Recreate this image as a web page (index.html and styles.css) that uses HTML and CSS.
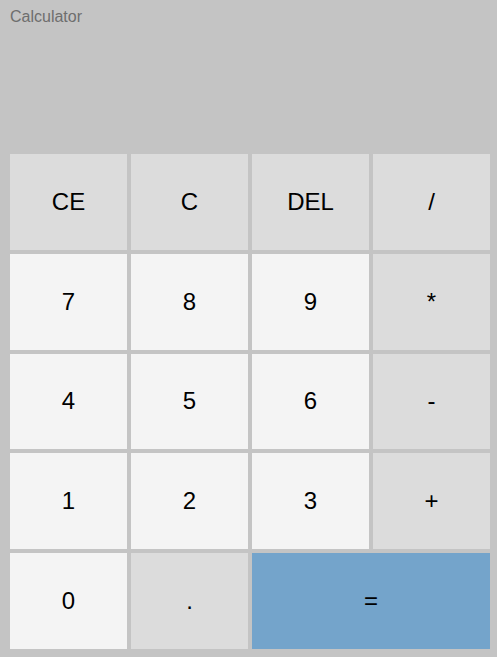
FILE: index.html
```html
<!DOCTYPE html>
<html lang="en">
<head>
    <meta charset="UTF-8">
    <meta name="viewport" content="width=device-width, initial-scale=1.0">
    <title>Calculator</title>
    <link rel="stylesheet" href="styles.css">
</head>
<body>
    <div class="calculator">
        <div class="display">
            <span class="title">Calculator</span>
        </div>
        <div class="keys">
            <button class="key op">CE</button>
            <button class="key op">C</button>
            <button class="key op">DEL</button>
            <button class="key op">/</button>

            <button class="key">7</button>
            <button class="key">8</button>
            <button class="key">9</button>
            <button class="key op">*</button>

            <button class="key">4</button>
            <button class="key">5</button>
            <button class="key">6</button>
            <button class="key op">-</button>

            <button class="key">1</button>
            <button class="key">2</button>
            <button class="key">3</button>
            <button class="key op">+</button>

            <button class="key">0</button>
            <button class="key op">.</button>
            <button class="key equals">=</button>
        </div>
    </div>
</body>
</html>
```

FILE: styles.css
```css
body {
    margin: 0;
    background: #c4c4c4;
    font-family: 'Liberation Sans', Arial, sans-serif;
}

.calculator {
    width: 480px;
    padding: 8px 7px 8px 10px;
}

.display {
    height: 146px;
}

.title {
    font-size: 16px;
    color: #6e6e6e;
}

.keys {
    display: grid;
    grid-template-columns: repeat(4, 117px);
    grid-template-rows: repeat(5, 1fr);
    gap: 4px;
    height: 495px;
}

.key {
    border: none;
    margin: 0;
    padding: 0;
    background: #f4f4f4;
    color: #000;
    font-family: inherit;
    font-size: 24px;
    cursor: pointer;
}

.key.op {
    background: #dcdcdc;
}

.key.equals {
    grid-column: span 2;
    background: #74a4cb;
}
```
